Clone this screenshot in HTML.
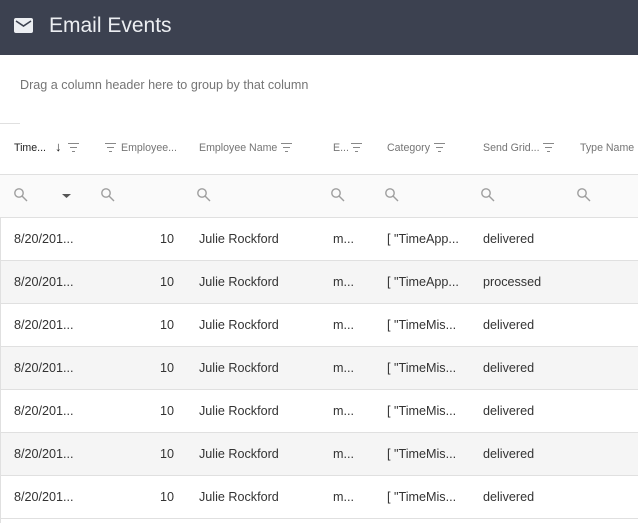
<!DOCTYPE html>
<html><head><meta charset="utf-8"><style>
*{margin:0;padding:0;box-sizing:border-box}
body{width:638px;height:523px;overflow:hidden;background:#fff;font-family:"Liberation Sans",sans-serif;position:relative}
.top{position:absolute;left:0;top:0;width:638px;height:55px;background:#3c4150}
.title{position:absolute;left:49px;top:14px;font-size:21px;color:#eceef2}
.grp{position:absolute;left:20px;top:78px;font-size:12.6px;color:#757575}
.t{position:absolute;white-space:nowrap}
.h{color:#757575;font-size:10.6px}
.row{position:absolute;left:0;width:638px;height:43px;border-bottom:1px solid #e0e0e0}
.c{color:#333;font-size:12.6px}
svg{position:absolute}
</style></head><body>
<div class="top">
<svg style="left:14px;top:18px" width="19" height="15" viewBox="0 0 19 15"><rect width="19" height="15" rx="2" fill="#eceef2"/><path d="M2 3 L9.5 8 L17 3" stroke="#3c4150" stroke-width="1.6" fill="none"/></svg>
<div class="title">Email Events</div>
</div>
<div class="grp">Drag a column header here to group by that column</div>
<div style="position:absolute;left:0;top:123px;width:20px;height:1px;background:#e0e0e0"></div>
<div style="position:absolute;left:0;top:174px;width:638px;height:44px;background:#fafafa;border-top:1px solid #e0e0e0;border-bottom:1px solid #e0e0e0"></div>
<div class="t h" style="left:14px;top:142px;color:#222">Time...</div>
<div class="t" style="left:55px;top:139px;font-size:13px;color:#222">↓</div>
<div class="t h" style="left:121px;top:142px">Employee...</div>
<div class="t h" style="left:199px;top:142px">Employee Name</div>
<div class="t h" style="left:333px;top:142px">E...</div>
<div class="t h" style="left:387px;top:142px">Category</div>
<div class="t h" style="left:483px;top:142px">Send Grid...</div>
<div class="t h" style="left:580px;top:142px">Type Name</div>
<svg width="638" height="523" style="left:0;top:0">
<g stroke="#888" stroke-width="1" fill="none">
<path d="M68 143.5h11M70 147.5h7M72 151.5h3"/>
<path d="M105 143.5h11M107 147.5h7M109 151.5h3"/>
<path d="M281 143.5h11M283 147.5h7M285 151.5h3"/>
<path d="M351 143.5h11M353 147.5h7M355 151.5h3"/>
<path d="M434 143.5h11M436 147.5h7M438 151.5h3"/>
<path d="M543 143.5h11M545 147.5h7M547 151.5h3"/>
</g>
<g stroke="#9e9e9e" stroke-width="1.4" fill="none">
<g transform="translate(14,188)"><circle cx="5" cy="5" r="4.2"/><path d="M8 8l5 5"/></g>
<g transform="translate(101,188)"><circle cx="5" cy="5" r="4.2"/><path d="M8 8l5 5"/></g>
<g transform="translate(197,188)"><circle cx="5" cy="5" r="4.2"/><path d="M8 8l5 5"/></g>
<g transform="translate(331,188)"><circle cx="5" cy="5" r="4.2"/><path d="M8 8l5 5"/></g>
<g transform="translate(385,188)"><circle cx="5" cy="5" r="4.2"/><path d="M8 8l5 5"/></g>
<g transform="translate(481,188)"><circle cx="5" cy="5" r="4.2"/><path d="M8 8l5 5"/></g>
<g transform="translate(577,188)"><circle cx="5" cy="5" r="4.2"/><path d="M8 8l5 5"/></g>
</g>
<path d="M62 194h9l-4.5 4z" fill="#555"/>
</svg>
<div class="row" style="top:218px"></div>
<div class="row" style="top:261px;background:#f5f5f5"></div>
<div class="row" style="top:304px"></div>
<div class="row" style="top:347px;background:#f5f5f5"></div>
<div class="row" style="top:390px"></div>
<div class="row" style="top:433px;background:#f5f5f5"></div>
<div class="row" style="top:476px"></div>
<div style="position:absolute;left:0;top:218px;width:1px;height:305px;background:#e0e0e0"></div>
<div id="cells"></div>
<script>
var cat=["[ \"TimeApp...","[ \"TimeApp...","[ \"TimeMis...","[ \"TimeMis...","[ \"TimeMis...","[ \"TimeMis...","[ \"TimeMis..."];
var st=["delivered","processed","delivered","delivered","delivered","delivered","delivered"];
var h="";
for(var i=0;i<7;i++){var y=232+i*43;
h+='<div class="t c" style="left:14px;top:'+y+'px">8/20/201...</div>';
h+='<div class="t c" style="left:160px;top:'+y+'px">10</div>';
h+='<div class="t c" style="left:199px;top:'+y+'px">Julie Rockford</div>';
h+='<div class="t c" style="left:333px;top:'+y+'px">m...</div>';
h+='<div class="t c" style="left:387px;top:'+y+'px">'+cat[i]+'</div>';
h+='<div class="t c" style="left:483px;top:'+y+'px">'+st[i]+'</div>';}
document.getElementById("cells").innerHTML=h;
</script>
</body></html>
